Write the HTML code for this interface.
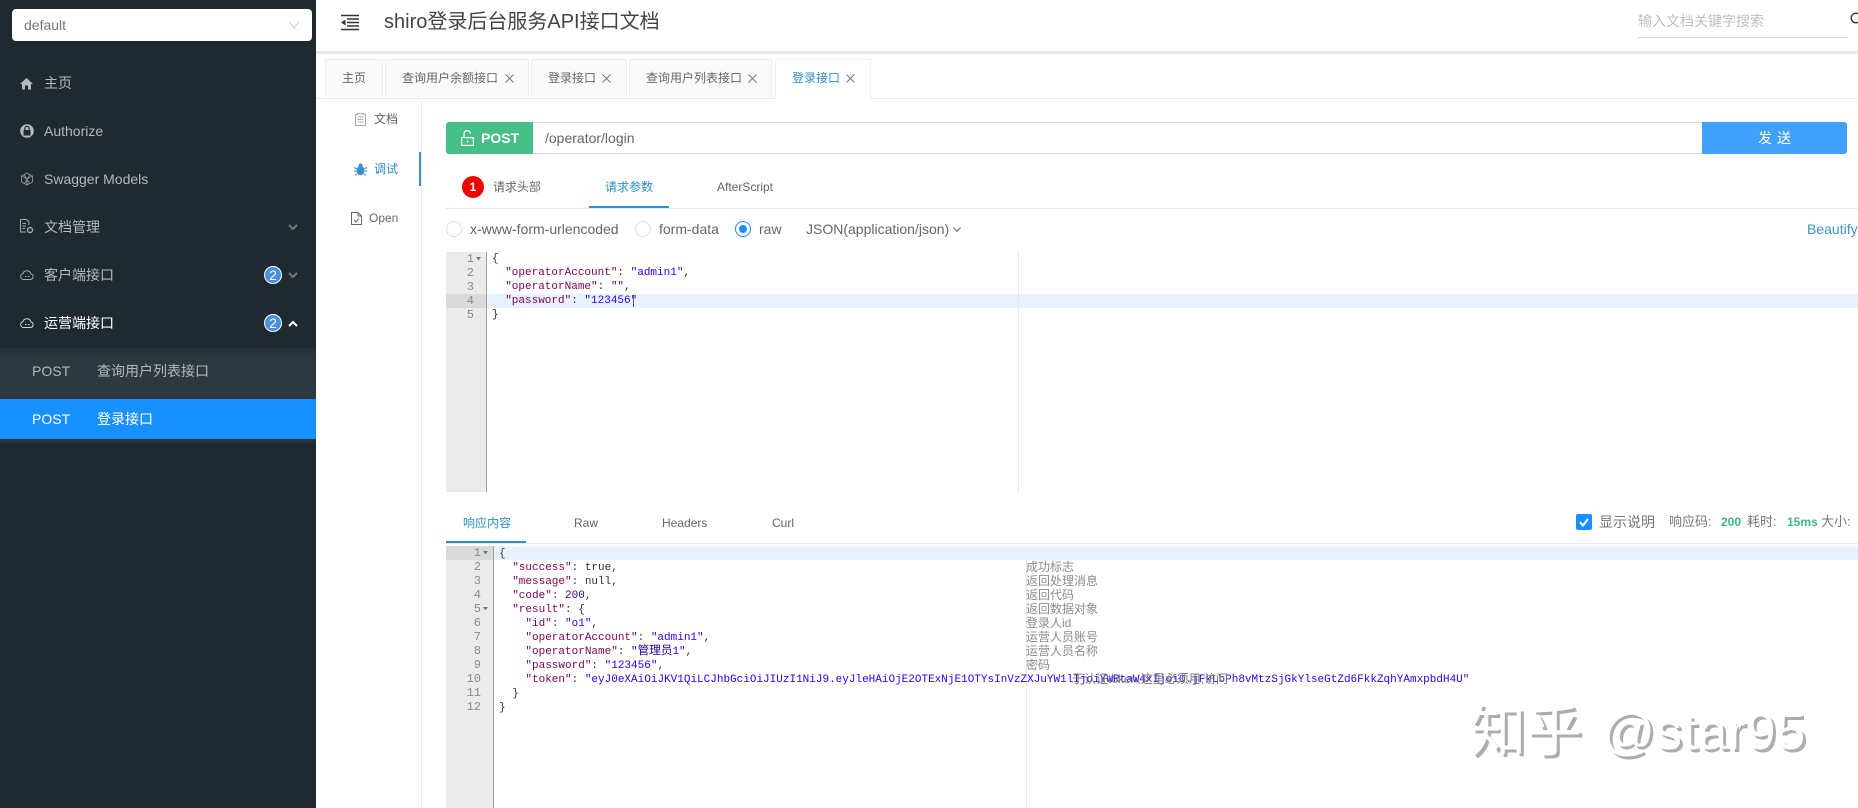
<!DOCTYPE html>
<html lang="zh">
<head>
<meta charset="utf-8">
<title>shiro登录后台服务API接口文档</title>
<style>
html,body{margin:0;padding:0;background:#fff}
#p{position:relative;width:1858px;height:808px;overflow:hidden;background:#fff;font-family:"Liberation Sans","Noto Sans CJK SC",sans-serif;color:#555}
.t{position:absolute;white-space:nowrap;line-height:20px}
.b{position:absolute}
svg{position:absolute;overflow:visible}
.m{color:#b4b9bc;font-size:14px}
.tab{position:absolute;top:59px;height:38px;background:#fafafa;border:1px solid #eee;border-bottom:0;box-sizing:border-box;border-radius:2px 2px 0 0}
.tt{font-size:12px;color:#666}
.code{position:absolute;margin:0;font-family:"Liberation Mono","Noto Sans CJK SC",monospace;font-size:11px;line-height:14px;color:#333;white-space:pre}
.k{color:#7f0055}.s{color:#2a00ff}.n{color:#2a00a0}
.z{font-size:11.6px;color:#1a0090}
.g{position:absolute;margin:0;font-family:"Liberation Mono",monospace;font-size:12px;line-height:14px;color:#8a8a8a;text-align:right;white-space:pre}
.c{position:absolute;white-space:nowrap;font-size:12px;line-height:14px;color:#8c8c8c;left:1026px}
.r{position:absolute;width:16px;height:16px;border:1px solid #ddd;border-radius:50%;box-sizing:border-box;background:#fff;top:221px}
</style>
</head>
<body>
<div id="p">
<!-- sidebar -->
<div class="b" style="left:0;top:0;width:316px;height:808px;background:#1f2a30"></div>
<div class="b" style="left:12px;top:9px;width:300px;height:32px;background:#fff;border-radius:4px"></div>
<div class="t" style="left:24px;top:15px;font-size:14px;color:#777">default</div>
<svg style="left:289px;top:22px" width="10" height="7"><path d="M.5 .5L5 6L9.5 .5" fill="none" stroke="#ccc"/></svg>

<svg style="left:20px;top:77px" width="13" height="13" viewBox="0 0 13 13"><path d="M6.5 1L13 7H11V12.5H8V8.5H5V12.5H2V7H0Z" fill="#b4b9bc"/></svg>
<div class="t m" style="left:44px;top:73px">主页</div>
<svg style="left:20px;top:124px" width="14" height="14" viewBox="0 0 14 14"><circle cx="7" cy="7" r="6.8" fill="#b4b9bc"/><rect x="3.5" y="6" width="7" height="5.5" fill="#1f2a30"/><path d="M4.8 6V4.6a2.2 2.2 0 0 1 4.4 0V6" fill="none" stroke="#1f2a30" stroke-width="1.2"/></svg>
<div class="t m" style="left:44px;top:121px">Authorize</div>
<svg style="left:20px;top:172px" width="14" height="14" viewBox="0 0 14 14"><path d="M7 1L12.5 4V10L7 13L1.500 10V4ZM1.500 4L7 7L12.500 4M7 7V13M4 2.500L9.500 11.500M10 2.500L4.500 11.500" fill="none" stroke="#8f969a" stroke-width=".9"/></svg>
<div class="t m" style="left:44px;top:169px">Swagger Models</div>
<svg style="left:20px;top:219px" width="14" height="15" viewBox="0 0 14 15"><path d="M.5 .5H6.500L9 3V6M.5 .5V13H6M2.500 4.500H6M2.500 7H6M2.500 9.500H5" fill="none" stroke="#a4aaad"/><circle cx="10" cy="11" r="2.500" fill="none" stroke="#a4aaad" stroke-width="1.400"/></svg>
<div class="t m" style="left:44px;top:217px">文档管理</div>
<svg style="left:288px;top:224px" width="10" height="7"><path d="M1 1L5 5L9 1" fill="none" stroke="#6f787d" stroke-width="2"/></svg>

<svg style="left:20px;top:269px" width="14" height="11" viewBox="0 0 14 11"><path d="M3.500 10.500a3 3 0 0 1-.6-5.900a4.200 4.200 0 0 1 8 .2a2.900 2.900 0 0 1-.4 5.700Z" fill="none" stroke="#a4aaad"/><path d="M5 7.500h1.500M8 7.500h1.500" stroke="#a4aaad"/></svg>
<div class="t m" style="left:44px;top:265px">客户端接口</div>
<div class="b" style="left:264px;top:266px;width:18px;height:18px;border-radius:50%;background:#4a90d9;border:1px solid #fff;box-sizing:border-box;color:#fff;font-size:14px;line-height:16px;text-align:center">2</div>
<svg style="left:288px;top:272px" width="10" height="7"><path d="M1 1L5 5L9 1" fill="none" stroke="#6f787d" stroke-width="2"/></svg>

<svg style="left:20px;top:317px" width="14" height="11" viewBox="0 0 14 11"><path d="M3.500 10.500a3 3 0 0 1-.6-5.900a4.200 4.200 0 0 1 8 .2a2.900 2.900 0 0 1-.4 5.700Z" fill="none" stroke="#d5d8da"/><path d="M5 7.500h1.500M8 7.500h1.500" stroke="#d5d8da"/></svg>
<div class="t" style="left:44px;top:313px;font-size:14px;color:#fff">运营端接口</div>
<div class="b" style="left:264px;top:314px;width:18px;height:18px;border-radius:50%;background:#4a90d9;border:1px solid #fff;box-sizing:border-box;color:#fff;font-size:14px;line-height:16px;text-align:center">2</div>
<svg style="left:288px;top:320px" width="10" height="7"><path d="M1 6L5 2L9 6" fill="none" stroke="#fff" stroke-width="2"/></svg>

<div class="b" style="left:0;top:348px;width:316px;height:51px;background:linear-gradient(#273238,#2d393f 30%,#2d393f)"></div>
<div class="t m" style="left:32px;top:361px">POST</div>
<div class="t m" style="left:97px;top:361px">查询用户列表接口</div>
<div class="b" style="left:0;top:399px;width:316px;height:40px;background:#1890ff"></div>
<div class="b" style="left:0;top:439px;width:316px;height:6px;background:linear-gradient(#2b373d,#1f2a30)"></div>
<div class="t" style="left:32px;top:409px;font-size:14px;color:#fff">POST</div>
<div class="t" style="left:97px;top:409px;font-size:14px;color:#fff">登录接口</div>

<!-- header -->
<div class="b" style="left:316px;top:51px;width:1542px;height:3px;background:#e8e8e8"></div>
<svg style="left:340px;top:14px" width="20" height="17" viewBox="0 0 20 17"><path d="M1 1.500H19M7 8.500H19M1 15.500H19M7 5H19M7 12H19" stroke="#333" stroke-width="1.500" fill="none"/><path d="M5.500 5.500V11.500L1 8.500Z" fill="#333"/></svg>
<div class="t" style="left:384px;top:10px;font-size:20px;line-height:24px;color:#444">shiro登录后台服务API接口文档</div>
<div class="t" style="left:1638px;top:11px;font-size:14px;color:#bfbfbf">输入文档关键字搜索</div>
<div class="b" style="left:1638px;top:37px;width:210px;height:1px;background:#ddd"></div>
<svg style="left:1850px;top:12px" width="14" height="14"><circle cx="6" cy="6" r="4.800" fill="none" stroke="#333" stroke-width="1.300"/><path d="M9.500 9.500L13 13" stroke="#333" stroke-width="1.300"/></svg>

<!-- doc tabs -->
<div class="b" style="left:316px;top:98px;width:1542px;height:1px;background:#e8e8e8"></div>
<div class="tab" style="left:325px;width:58px"></div><div class="t tt" style="left:342px;top:68px">主页</div>
<div class="tab" style="left:385px;width:144px"></div><div class="t tt" style="left:402px;top:68px">查询用户余额接口</div>
<svg style="left:505px;top:74px" width="9" height="9"><path d="M.5 .5L8.500 8.500M8.500 .5L.5 8.500" stroke="#777"/></svg>
<div class="tab" style="left:531px;width:96px"></div><div class="t tt" style="left:548px;top:68px">登录接口</div>
<svg style="left:602px;top:74px" width="9" height="9"><path d="M.5 .5L8.500 8.500M8.500 .5L.5 8.500" stroke="#777"/></svg>
<div class="tab" style="left:629px;width:143px"></div><div class="t tt" style="left:646px;top:68px">查询用户列表接口</div>
<svg style="left:748px;top:74px" width="9" height="9"><path d="M.5 .5L8.500 8.500M8.500 .5L.5 8.500" stroke="#777"/></svg>
<div class="tab" style="left:775px;width:96px;height:40px;background:#fff"></div><div class="t tt" style="left:792px;top:68px;color:#2f8fc8">登录接口</div>
<svg style="left:846px;top:74px" width="9" height="9"><path d="M.5 .5L8.500 8.500M8.500 .5L.5 8.500" stroke="#777"/></svg>

<!-- side nav -->
<div class="b" style="left:421px;top:102px;width:1px;height:706px;background:#e8e8e8"></div>
<div class="b" style="left:419px;top:152px;width:2px;height:34px;background:#3a8fc8"></div>
<svg style="left:355px;top:113px" width="11" height="13" viewBox="0 0 11 13"><path d="M2.500 .5H8.500V1.500H10.500V12.500H.5V1.500H2.500ZM2.500 4H8.500M2.500 6.500H8.500M2.500 9H8.500" fill="none" stroke="#aaa"/></svg>
<div class="t tt" style="left:374px;top:109px;color:#666">文档</div>
<svg style="left:354px;top:163px" width="13" height="13" viewBox="0 0 13 13"><ellipse cx="6.500" cy="7.500" rx="3.800" ry="4.800" fill="#3a8fc8"/><circle cx="6.500" cy="2.500" r="2" fill="#3a8fc8"/><path d="M0 4.500L3 6M13 4.500L10 6M0 8H3M13 8H10M1 12.500L3.500 10.500M12 12.500L9.500 10.500" stroke="#3a8fc8"/></svg>
<div class="t tt" style="left:374px;top:159px;color:#2f8fc8">调试</div>
<svg style="left:351px;top:212px" width="11" height="13" viewBox="0 0 11 13"><path d="M.5 .5H7L10.500 4V12.500H.5ZM7 .5V4H10.500M3 8L5 10L8 6.500" fill="none" stroke="#666"/></svg>
<div class="t tt" style="left:369px;top:208px">Open</div>

<!-- url bar -->
<div class="b" style="left:446px;top:122px;width:87px;height:32px;background:#47bd88;border-radius:3px 0 0 3px"></div>
<svg style="left:461px;top:130px" width="13" height="16" viewBox="0 0 13 16"><rect x=".6" y="7.600" width="11.800" height="7.800" fill="none" stroke="#fff" stroke-width="1.200"/><path d="M3 7.500V3.600a3.200 3 0 0 1 6.400 0M6.500 10.500V12.500" fill="none" stroke="#fff" stroke-width="1.200"/></svg>
<div class="t" style="left:481px;top:128px;font-size:14px;font-weight:bold;color:#fff">POST</div>
<div class="b" style="left:533px;top:122px;width:1169px;height:32px;border-top:1px solid #ddd;border-bottom:1px solid #ddd;box-sizing:border-box"></div>
<div class="t" style="left:545px;top:128px;font-size:14px;color:#666">/operator/login</div>
<div class="b" style="left:1702px;top:122px;width:145px;height:32px;background:#40a0fa;border-radius:0 3px 3px 0"></div>
<div class="t" style="left:1758px;top:128px;font-size:14px;color:#fff;letter-spacing:5px">发送</div>

<!-- req tabs -->
<div class="b" style="left:446px;top:208px;width:1412px;height:1px;background:#e8e8e8"></div>
<div class="b" style="left:462px;top:176px;width:22px;height:22px;border-radius:50%;background:#f00000;color:#fff;font-size:12px;font-weight:bold;line-height:22px;text-align:center">1</div>
<div class="t tt" style="left:493px;top:177px">请求头部</div>
<div class="t tt" style="left:605px;top:177px;color:#2f8fc8">请求参数</div>
<div class="b" style="left:589px;top:206px;width:80px;height:2px;background:#2f8fc8"></div>
<div class="t tt" style="left:717px;top:177px">AfterScript</div>

<!-- radios -->
<div class="r" style="left:446px"></div>
<div class="t" style="left:470px;top:219px;font-size:14px;color:#666">x-www-form-urlencoded</div>
<div class="r" style="left:635px"></div>
<div class="t" style="left:659px;top:219px;font-size:14px;color:#666">form-data</div>
<div class="r" style="left:735px;border-color:#1890ff"></div>
<div class="b" style="left:739px;top:225px;width:8px;height:8px;border-radius:50%;background:#1890ff"></div>
<div class="t" style="left:759px;top:219px;font-size:14px;color:#666">raw</div>
<div class="t" style="left:806px;top:219px;font-size:14px;color:#666">JSON(application/json)</div>
<svg style="left:953px;top:227px" width="8" height="6"><path d="M.5 .5L4 4.500L7.500 .5" fill="none" stroke="#666"/></svg>
<div class="t" style="left:1807px;top:219px;font-size:14px;color:#3c93d0">Beautify</div>

<!-- request editor -->
<div class="b" style="left:446px;top:252px;width:40px;height:240px;background:#ebebeb"></div>
<div class="b" style="left:486px;top:252px;width:1px;height:240px;background:#9f9f9f"></div>
<div class="b" style="left:446px;top:294px;width:40px;height:14px;background:#dadada"></div>
<div class="b" style="left:487px;top:294px;width:1371px;height:14px;background:#e8f2fe"></div>
<div class="b" style="left:1018px;top:252px;width:1px;height:240px;background:#e8e8e8"></div>
<pre class="g" style="left:446px;top:252px;width:28px">1
2
3
4
5</pre>
<svg style="left:476px;top:257px" width="6" height="4"><path d="M0 0H5L2.500 3.500Z" fill="#777"/></svg>
<pre class="code" style="left:492px;top:252px">{
  <span class="k">"operatorAccount"</span>: <span class="s">"admin1"</span>,
  <span class="k">"operatorName"</span>: <span class="s">""</span>,
  <span class="k">"password"</span>: <span class="s">"123456"</span>
}</pre>
<div class="b" style="left:633px;top:295px;width:1px;height:12px;background:#555"></div>

<!-- response tabs -->
<div class="t tt" style="left:463px;top:513px;color:#2f8fc8">响应内容</div>
<div class="t tt" style="left:574px;top:513px">Raw</div>
<div class="t tt" style="left:662px;top:513px">Headers</div>
<div class="t tt" style="left:772px;top:513px">Curl</div>
<div class="b" style="left:446px;top:543px;width:1412px;height:1px;background:#e8e8e8"></div>
<div class="b" style="left:446px;top:541px;width:80px;height:2px;background:#2f8fc8"></div>
<div class="b" style="left:1576px;top:514px;width:16px;height:16px;background:#1890ff;border-radius:2px"></div>
<svg style="left:1576px;top:514px" width="16" height="16"><path d="M4 8L7 11.500L12 5" fill="none" stroke="#fff" stroke-width="2"/></svg>
<div class="t" style="left:1599px;top:512px;font-size:14px;color:#777">显示说明</div>
<div class="t" style="left:1669px;top:512px;font-size:13px;color:#777">响应码:</div>
<div class="t" style="left:1721px;top:512px;font-size:12px;font-weight:bold;color:#41b883">200</div>
<div class="t" style="left:1747px;top:512px;font-size:13px;color:#777">耗时:</div>
<div class="t" style="left:1787px;top:512px;font-size:12px;font-weight:bold;color:#41b883">15ms</div>
<div class="t" style="left:1821px;top:512px;font-size:13px;color:#777">大小:</div>

<!-- response editor -->
<div class="b" style="left:446px;top:546px;width:47px;height:262px;background:#ebebeb"></div>
<div class="b" style="left:493px;top:546px;width:1px;height:262px;background:#9f9f9f"></div>
<div class="b" style="left:446px;top:546px;width:47px;height:14px;background:#dadada"></div>
<div class="b" style="left:494px;top:546px;width:1364px;height:14px;background:#e8f2fe"></div>
<div class="b" style="left:1026px;top:560px;width:1px;height:248px;background:#e8e8e8"></div>
<pre class="g" style="left:446px;top:546px;width:35px">1
2
3
4
5
6
7
8
9
10
11
12</pre>
<svg style="left:483px;top:551px" width="6" height="4"><path d="M0 0H5L2.500 3.500Z" fill="#777"/></svg>
<svg style="left:483px;top:607px" width="6" height="4"><path d="M0 0H5L2.500 3.500Z" fill="#777"/></svg>
<pre class="code" style="left:499px;top:547px">{
  <span class="k">"success"</span>: true,
  <span class="k">"message"</span>: null,
  <span class="k">"code"</span>: <span class="n">200</span>,
  <span class="k">"result"</span>: {
    <span class="k">"id"</span>: <span class="s">"o1"</span>,
    <span class="k">"operatorAccount"</span>: <span class="s">"admin1"</span>,
    <span class="k">"operatorName"</span>: <span class="s">"<span class="z">管理员</span>1"</span>,
    <span class="k">"password"</span>: <span class="s">"123456"</span>,
    <span class="k">"token"</span>: <span class="s">"eyJ0eXAiOiJKV1QiLCJhbGciOiJIUzI1NiJ9.eyJleHAiOjE2OTExNjE1OTYsInVzZXJuYW1lIjoiYWRtaW4xIjoi0.jFkLbPh8vMtzSjGkYlseGtZd6FkkZqhYAmxpbdH4U"</span>
  }
}</pre>
<div class="c" style="top:560px">成功标志</div>
<div class="c" style="top:574px">返回处理消息</div>
<div class="c" style="top:588px">返回代码</div>
<div class="c" style="top:602px">返回数据对象</div>
<div class="c" style="top:616px">登录人id</div>
<div class="c" style="top:630px">运营人员账号</div>
<div class="c" style="top:644px">运营人员名称</div>
<div class="c" style="top:658px">密码</div>
<div class="c" style="top:672px;left:1072px;color:#777">于认证token,这里必须用,访问</div>

<!-- watermark -->
<div class="t" style="left:1470px;top:700px;font-size:56px;line-height:64px;color:#fff;text-shadow:3px 3px 0 #adadad">知乎</div>
<div class="t" style="left:1602px;top:700px;font-size:52px;line-height:64px;color:#fff;text-shadow:3px 3px 0 #adadad;letter-spacing:1px;font-family:'Liberation Sans',sans-serif">@star95</div>
</div>
</body>
</html>
